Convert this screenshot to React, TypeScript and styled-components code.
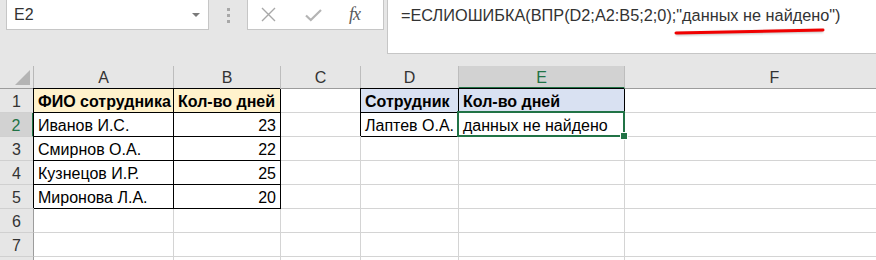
import styled, { createGlobalStyle } from "styled-components";

const GlobalStyle = createGlobalStyle`
  html, body {
    margin: 0;
    padding: 0;
    background: #ffffff;
    overflow: hidden;
  }
`;

const Page = styled.div`
  width: 876px;
  height: 260px;
  overflow: hidden;
  background: #ffffff;
  font-family: "Liberation Sans", Arial, sans-serif;
`;

const Toolbar = styled.div`
  height: 66px;
  background: #e6e6e6;
  display: flex;
  align-items: flex-start;
  padding-left: 6px;
  box-sizing: border-box;
`;

const NameBox = styled.div`
  width: 203px;
  height: 31px;
  margin-top: -1px;
  box-sizing: border-box;
  background: #fff;
  border: 1px solid #c6c6c6;
  display: flex;
  align-items: center;
  justify-content: space-between;
  padding: 0 8px 0 7px;
  font-size: 16px;
  color: #333;
`;

const DropArrow = styled.span`
  width: 0;
  height: 0;
  border-left: 4px solid transparent;
  border-right: 4px solid transparent;
  border-top: 4px solid #7a7a7a;
`;

const Grip = styled.div`
  width: 38px;
  height: 29px;
  display: flex;
  flex-direction: column;
  align-items: center;
  justify-content: center;
  gap: 3px;
  padding-top: 1px;
  box-sizing: border-box;
`;

const GripDot = styled.span`
  width: 3px;
  height: 3px;
  background: #a8a8a8;
`;

const FxBox = styled.div`
  width: 137px;
  height: 31px;
  margin-top: -1px;
  box-sizing: border-box;
  background: #fff;
  border: 1px solid #c6c6c6;
  display: flex;
  align-items: center;
  gap: 29px;
  padding-left: 13px;
`;

const Fx = styled.span`
  font-family: "Liberation Serif", "Times New Roman", serif;
  font-style: italic;
  font-size: 18px;
  color: #5a5a5a;
  letter-spacing: -1px;
  margin-left: -2px;
`;

const FormulaBox = styled.div`
  position: relative;
  flex: 1;
  height: 55px;
  margin-top: -1px;
  margin-left: 3px;
  box-sizing: border-box;
  background: #fff;
  border: 1px solid #c6c6c6;
  border-right: none;
  padding: 6px 0 0 13px;
  font-size: 16.3px;
  color: #333;
  white-space: nowrap;
`;

const Underline = styled.svg`
  position: absolute;
  left: 287px;
  top: 23px;
  overflow: visible;
`;

const Sheet = styled.div`
  display: grid;
  grid-template-columns: 34px 140px 107px 80px 98px 166px 300px;
  grid-template-rows: 23px repeat(8, 24px);
  font-size: 16px;
  color: #000;
`;

const Corner = styled.div`
  background: #e6e6e6;
  border-right: 1px solid #b8b8b8;
  border-bottom: 1px solid #9c9c9c;
  display: flex;
  align-items: flex-end;
  justify-content: flex-end;
  padding: 0 3px 3px 0;
`;

const ColHeader = styled.div<{ $active?: boolean }>`
  background: ${(p) => (p.$active ? "#d2d2d2" : "#e6e6e6")};
  color: ${(p) => (p.$active ? "#217346" : "#333")};
  border-right: 1px solid #bdbdbd;
  border-bottom: ${(p) => (p.$active ? "2px solid #217346" : "1px solid #9c9c9c")};
  display: flex;
  align-items: center;
  justify-content: center;
  box-sizing: border-box;
  padding-top: 2px;
`;

const RowHeader = styled.div<{ $active?: boolean }>`
  background: ${(p) => (p.$active ? "#d2d2d2" : "#e6e6e6")};
  color: ${(p) => (p.$active ? "#217346" : "#333")};
  border-bottom: 1px solid #d0d0d0;
  border-right: ${(p) => (p.$active ? "2px solid #217346" : "1px solid #9c9c9c")};
  box-sizing: border-box;
  display: flex;
  align-items: center;
  justify-content: center;
  padding-top: 2px;
`;

const Cell = styled.div<{
  $fill?: string;
  $bold?: boolean;
  $num?: boolean;
  $boxed?: boolean;
  $selected?: boolean;
}>`
  position: relative;
  box-sizing: border-box;
  background: ${(p) => p.$fill ?? "#fff"};
  border-right: 1px solid ${(p) => (p.$boxed ? "#000" : "#d4d4d4")};
  border-bottom: 1px solid ${(p) => (p.$boxed ? "#000" : "#d4d4d4")};
  ${(p) => p.$boxed && "box-shadow: -1px -1px 0 #000;"}
  font-weight: ${(p) => (p.$bold ? 700 : 400)};
  display: flex;
  align-items: center;
  justify-content: ${(p) => (p.$num ? "flex-end" : "flex-start")};
  padding: 2px 4px 0 4px;
  white-space: nowrap;
  ${(p) =>
    p.$selected &&
    `
    z-index: 2;
    &::after {
      content: "";
      position: absolute;
      inset: -2px -1px -1px -2px;
      border: 2px solid #217346;
    }
  `}
`;

const FillHandle = styled.span`
  position: absolute;
  right: -4px;
  bottom: -4px;
  width: 6px;
  height: 6px;
  background: #217346;
  border: 1px solid #fff;
  z-index: 3;
`;

type CellData = {
  text?: string;
  fill?: string;
  bold?: boolean;
  num?: boolean;
  boxed?: boolean;
  selected?: boolean;
};

const YELLOW = "#fff2cc";
const BLUE = "#d9e1f2";

const columns = ["A", "B", "C", "D", "E", "F"];

const names = [
  ["Иванов И.С.", "23"],
  ["Смирнов О.А.", "22"],
  ["Кузнецов И.Р.", "25"],
  ["Миронова Л.А.", "20"],
];

const empty: CellData[] = [{}, {}, {}, {}, {}, {}];

const rows: CellData[][] = [
  [
    { text: "ФИО сотрудника", fill: YELLOW, bold: true, boxed: true },
    { text: "Кол-во дней", fill: YELLOW, bold: true, boxed: true },
    {},
    { text: "Сотрудник", fill: BLUE, bold: true, boxed: true },
    { text: "Кол-во дней", fill: BLUE, bold: true, boxed: true },
    {},
  ],
  ...names.map(([name, days], i) => [
    { text: name, boxed: true },
    { text: days, num: true, boxed: true },
    {},
    i === 0 ? { text: "Лаптев О.А.", boxed: true } : {},
    i === 0 ? { text: "данных не найдено", boxed: true, selected: true } : {},
    {},
  ]),
  empty,
  empty,
  empty,
];

// only rows 1-7 show their number; row 8 peeks in at the bottom edge
const VISIBLE_LABELS = 7;

export default function App() {
  return (
    <Page>
      <GlobalStyle />
      <Toolbar>
        <NameBox>
          <span>E2</span>
          <DropArrow />
        </NameBox>
        <Grip>
          <GripDot />
          <GripDot />
          <GripDot />
        </Grip>
        <FxBox>
          <svg width="15" height="15" viewBox="0 0 15 15">
            <path d="M1 1 L14 14 M14 1 L1 14" stroke="#a8a8a8" strokeWidth="1.4" fill="none" />
          </svg>
          <svg width="17" height="14" viewBox="0 0 17 14">
            <path d="M1 7.5 L5.8 12 L16 2" stroke="#b4b4b4" strokeWidth="2.2" fill="none" />
          </svg>
          <Fx>fx</Fx>
        </FxBox>
        <FormulaBox>
          =ЕСЛИОШИБКА(ВПР(D2;A2:B5;2;0);"данных не найдено")
          <Underline width="150" height="8">
            <defs>
              <filter id="blur" x="-10%" y="-100%" width="120%" height="300%">
                <feGaussianBlur stdDeviation="1" />
              </filter>
            </defs>
            <path d="M1 11 L148 8" stroke="rgba(0,0,0,0.25)" strokeWidth="3" filter="url(#blur)" />
            <path d="M1 10 L148 7" stroke="#f00000" strokeWidth="3" strokeLinecap="round" />
          </Underline>
        </FormulaBox>
      </Toolbar>
      <Sheet>
        <Corner>
          <svg width="15" height="15" viewBox="0 0 15 15">
            <polygon points="15,0 15,15 0,15" fill="#b4b4b4" />
          </svg>
        </Corner>
        {columns.map((c) => (
          <ColHeader key={c} $active={c === "E"}>
            {c}
          </ColHeader>
        ))}
        {rows.map((row, r) => [
          <RowHeader key={`h${r}`} $active={r === 1}>
            {r < VISIBLE_LABELS ? r + 1 : null}
          </RowHeader>,
          ...row.map((cell, c) => (
            <Cell
              key={`${r}-${c}`}
              $fill={cell.fill}
              $bold={cell.bold}
              $num={cell.num}
              $boxed={cell.boxed}
              $selected={cell.selected}
            >
              {cell.text}
              {cell.selected && <FillHandle />}
            </Cell>
          )),
        ])}
      </Sheet>
    </Page>
  );
}
